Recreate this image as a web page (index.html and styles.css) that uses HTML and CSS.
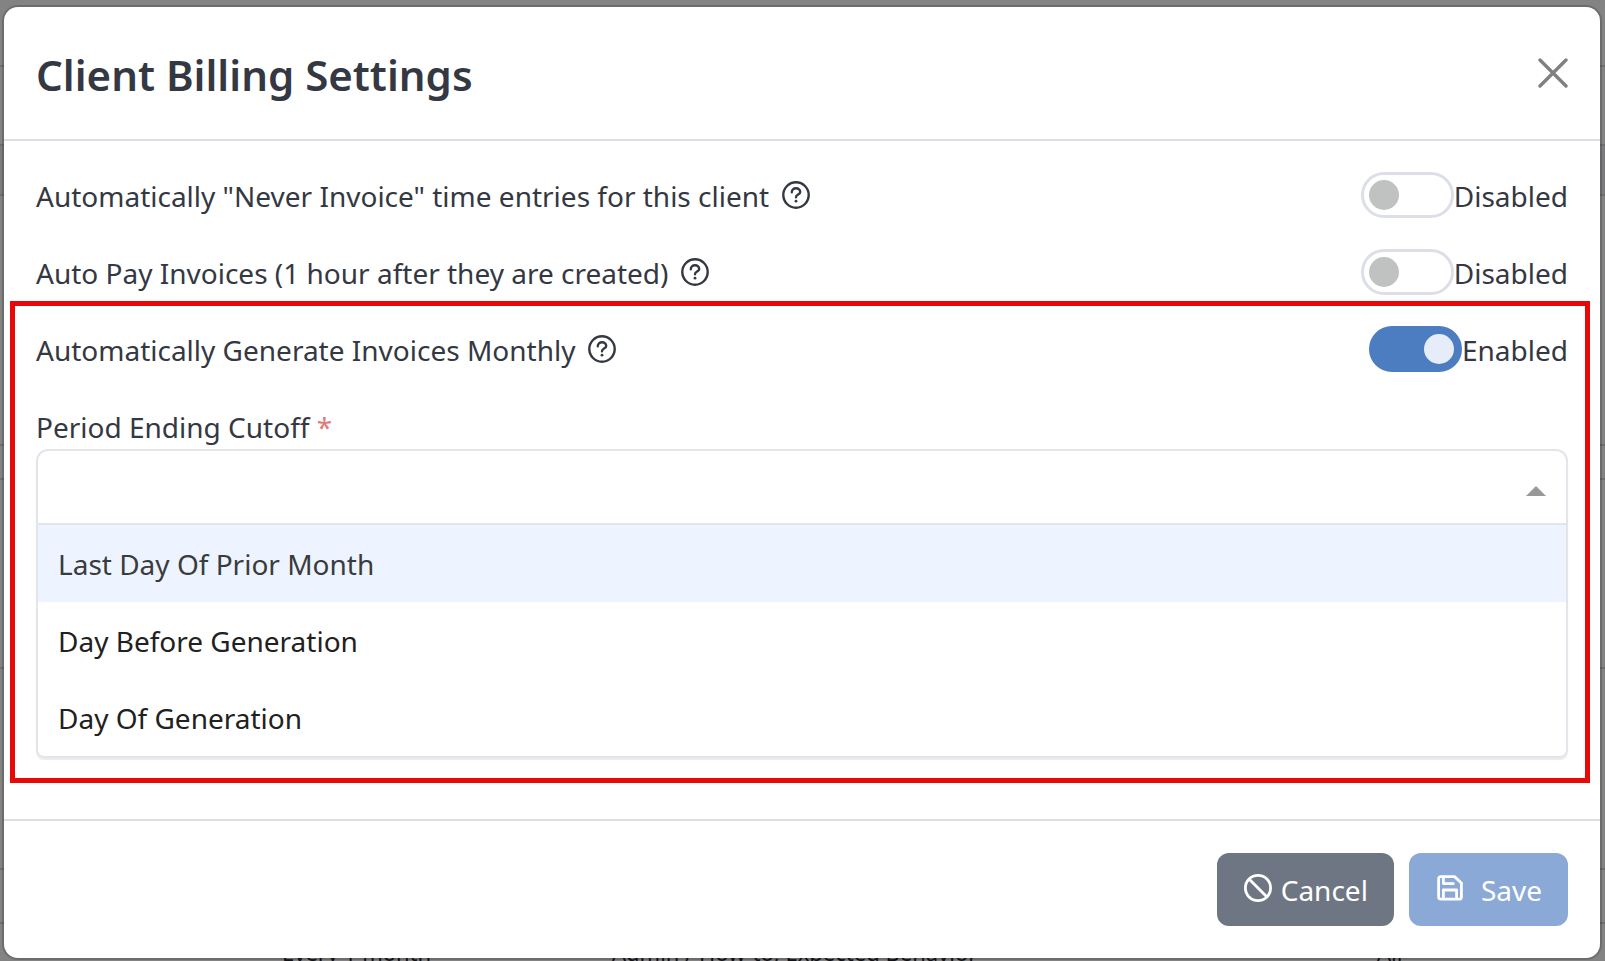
FILE: index.html
```
<!DOCTYPE html>
<html lang="en">
<head>
  <meta charset="UTF-8">
  <meta name="viewport" content="width=device-width, initial-scale=1.0">
  <title>Client Billing Settings</title>
  <link rel="stylesheet" href="styles.css">
</head>
<body>
  <!-- page behind the dialog -->
  <div class="page-behind" aria-hidden="true">
    <div class="behind-row behind-top"></div>
    <div class="behind-row behind-title"></div>
    <div class="behind-row behind-tabs"></div>
    <div class="behind-row behind-panel"></div>
    <div class="behind-row behind-head"></div>
    <div class="behind-row behind-space"></div>
    <div class="behind-row behind-filter"></div>
    <div class="behind-row behind-list"></div>
    <div class="behind-cells">
      <span>Every 1 month</span>
      <span>Admin / How-to, Expected Behavior</span>
      <span>All</span>
    </div>
  </div>

  <div class="modal" role="dialog" aria-labelledby="modal-title">
    <div class="modal-header">
      <h2 id="modal-title">Client Billing Settings</h2>
      <button type="button" class="close" aria-label="Close">
        <svg viewBox="0 0 30 30"><path d="M2 2 L28 28 M28 2 L2 28"/></svg>
      </button>
    </div>

    <div class="modal-body">
      <div class="setting">
        <label for="never-invoice">Automatically "Never Invoice" time entries for this client</label>
        <svg class="help" viewBox="0 0 28 28"><circle cx="14" cy="14" r="12.7"/><path d="M9.8 11.2 C9.8 8.7 11.6 7.2 14 7.2 C16.5 7.2 18.2 8.9 18.2 11 C18.2 13.6 14 13.6 14 16.2"/><circle class="dot" cx="14" cy="20.2" r="1.4"/></svg>
        <input type="checkbox" class="switch" id="never-invoice">
        <span class="state">Disabled</span>
      </div>

      <div class="setting">
        <label for="auto-pay">Auto Pay Invoices (1 hour after they are created)</label>
        <svg class="help" viewBox="0 0 28 28"><circle cx="14" cy="14" r="12.7"/><path d="M9.8 11.2 C9.8 8.7 11.6 7.2 14 7.2 C16.5 7.2 18.2 8.9 18.2 11 C18.2 13.6 14 13.6 14 16.2"/><circle class="dot" cx="14" cy="20.2" r="1.4"/></svg>
        <input type="checkbox" class="switch" id="auto-pay">
        <span class="state">Disabled</span>
      </div>

      <div class="highlight">
        <div class="setting">
          <label for="auto-generate">Automatically Generate Invoices Monthly</label>
          <svg class="help" viewBox="0 0 28 28"><circle cx="14" cy="14" r="12.7"/><path d="M9.8 11.2 C9.8 8.7 11.6 7.2 14 7.2 C16.5 7.2 18.2 8.9 18.2 11 C18.2 13.6 14 13.6 14 16.2"/><circle class="dot" cx="14" cy="20.2" r="1.4"/></svg>
          <input type="checkbox" class="switch" id="auto-generate" checked>
          <span class="state">Enabled</span>
        </div>

        <label class="field-label" for="cutoff">Period Ending Cutoff <span class="required">*</span></label>
        <div class="dropdown">
          <div class="dropdown-field">
            <select id="cutoff" required>
              <option value=""></option>
            </select>
            <svg class="arrow" viewBox="0 0 20 10"><path d="M0 10 L10 0 L20 10 Z"/></svg>
          </div>
          <ul class="options" role="listbox" aria-label="Period Ending Cutoff">
            <li class="option active" role="option" aria-selected="true">Last Day Of Prior Month</li>
            <li class="option" role="option" aria-selected="false">Day Before Generation</li>
            <li class="option" role="option" aria-selected="false">Day Of Generation</li>
          </ul>
        </div>
      </div>
    </div>

    <div class="modal-footer">
      <button type="button" class="btn btn-cancel">
        <svg viewBox="0 0 28 28"><circle cx="14" cy="14" r="12.6"/><path d="M5 5 L23 23"/></svg>
        Cancel
      </button>
      <button type="submit" class="btn btn-save" disabled>
        <svg viewBox="0 0 28 28"><path d="M4 2.6 H18.5 L25.4 9 V22.9 Q25.4 25.2 23.1 25.2 H4.9 Q2.6 25.2 2.6 22.9 V4.9 Q2.6 2.6 4.9 2.6 M7.4 2.8 V9.6 H18.4 M7.4 25 V16 H20.6 V25"/></svg>
        Save
      </button>
    </div>
  </div>
</body>
</html>
```
FILE: styles.css
```
* {
  box-sizing: border-box;
}
body {
  margin: 0;
  min-height: 100vh;
  overflow: hidden;
  position: relative;
  background: #838383;
  color: #343842;
  font-family: "Noto Sans", sans-serif;
  font-size: 28px;
  line-height: 40px;
}

/* dimmed page */
.page-behind {
  position: absolute;
  inset: 0;
  overflow: hidden;
}
.behind-row {
  border-bottom: 2px solid #6f6f71;
}
.behind-top {
  height: 67px;
}
.behind-title {
  height: 79px;
}
.behind-tabs {
  height: 50px;
  background: #7b7b7d;
}
.behind-panel {
  height: 250px;
}
.behind-head {
  height: 34px;
}
.behind-space {
  height: 189px;
}
.behind-filter {
  height: 201px;
}
.behind-list {
  height: 54px;
}
.behind-cells {
  display: grid;
  grid-template-columns: 330px 765px 1fr;
  padding: 8px 0 0 282px;
  color: #10131a;
  font-size: 22px;
  line-height: 40px;
}

.modal {
  position: relative;
  margin: 7px 5px 3px 4px;
  background: white;
  border-radius: 14px;
  box-shadow: 0 0 0 2px rgba(0, 0, 0, 0.17);
}
.modal-header {
  display: flex;
  align-items: center;
  justify-content: space-between;
  padding: 34px 32px;
  border-bottom: 2px solid #dbdfe5;
}
.modal-header h2 {
  margin: 0;
  padding-top: 4px;
  font-size: 42px;
  font-weight: 600;
  line-height: 60px;
}
.close {
  width: 30px;
  height: 30px;
  padding: 0;
  border: 0;
  background: none;
}
.close svg {
  display: block;
  stroke: #808080;
  stroke-width: 3.4;
  stroke-linecap: round;
}

.modal-body {
  padding: 15px 32px 36px;
}
.setting {
  display: flex;
  align-items: center;
  height: 77px;
}
.setting label,
.state {
  padding-top: 2px;
}
.help {
  width: 28px;
  height: 28px;
  margin-left: 13px;
  fill: none;
  stroke: #343842;
  stroke-width: 2.4;
  stroke-linecap: round;
}
.help .dot {
  fill: #343842;
  stroke: none;
}

.switch {
  appearance: none;
  display: flex;
  align-items: center;
  width: 93px;
  height: 46px;
  margin: 0 0 0 auto;
  padding: 0 5px;
  border: 3px solid #dcdfe8;
  border-radius: 23px;
  background: white;
}
.switch::before {
  content: "";
  width: 30px;
  height: 30px;
  border-radius: 50%;
  background: #c0c2c1;
}
.switch:checked {
  justify-content: flex-end;
  border-color: #4d7dc1;
  background: #4d7dc1;
}
.switch:checked::before {
  background: #e7edf8;
}

/* red frame round the monthly invoice settings */
.highlight {
  margin: -9px -22px 0 -26px;
  padding: 4px 17px 20px 21px;
  border: 5px solid #e90808;
}
.field-label {
  display: block;
  padding: 20px 0 2px;
}
.required {
  color: #e07a7a;
}
.dropdown {
  border: 2px solid #e4e5ea;
  border-radius: 12px 12px 8px 8px;
  box-shadow: 0 2px 1px #ececee;
}
.dropdown-field {
  position: relative;
}
.dropdown-field select {
  appearance: none;
  display: block;
  width: 100%;
  height: 72px;
  padding: 0 20px;
  border: 0;
  border-radius: 12px;
  background: none;
  font: inherit;
}
.arrow {
  position: absolute;
  top: 35px;
  right: 20px;
  width: 20px;
  height: 10px;
  fill: #999;
  pointer-events: none;
}
.options {
  margin: 0;
  padding: 0;
  border-top: 2px solid #e4e5ea;
  list-style: none;
}
.option {
  padding: 19px 20px 18px;
  color: #212121;
}
.option.active {
  background: #edf4ff;
  color: #3a3b3d;
}

.modal-footer {
  display: flex;
  justify-content: flex-end;
  gap: 15px;
  padding: 32px;
  border-top: 2px solid #dbdfe5;
}
.btn {
  display: flex;
  align-items: center;
  height: 73px;
  padding: 0 26px 0 27px;
  border: 0;
  border-radius: 12px;
  color: white;
  font: inherit;
}
.btn svg {
  width: 28px;
  height: 28px;
  margin-bottom: 3px;
  fill: none;
  stroke: white;
  stroke-width: 2.8;
  stroke-linejoin: round;
}
.btn-cancel {
  gap: 9px;
  background: #6f7683;
}
.btn-save {
  gap: 17px;
  background: #8ba9d7;
}
```
